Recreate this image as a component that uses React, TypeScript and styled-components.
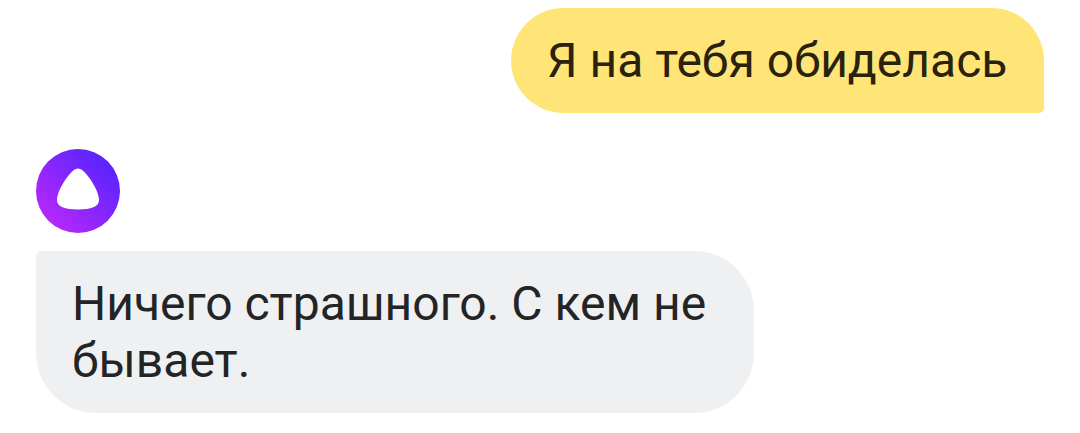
import React from 'react';
import styled, { createGlobalStyle } from 'styled-components';

const GlobalStyle = createGlobalStyle`
  body {
    margin: 0;
    background: #ffffff;
    font-family: Roboto, 'Liberation Sans', sans-serif;
  }
`;

const Chat = styled.main`
  display: flex;
  flex-direction: column;
  box-sizing: border-box;
  width: 1080px;
  height: 433px;
  padding: 8px 36px 20px;
  overflow: hidden;
`;

const Bubble = styled.div<{ $own?: boolean }>`
  box-sizing: border-box;
  align-self: ${(p) => (p.$own ? 'flex-end' : 'flex-start')};
  width: ${(p) => (p.$own ? '533px' : '718px')};
  height: ${(p) => (p.$own ? '105px' : '162px')};
  padding: 24px 36px;
  border-radius: ${(p) => (p.$own ? '54px 54px 5px 54px' : '5px 60px 60px 60px')};
  background: ${(p) => (p.$own ? '#ffe478' : '#eff0f2')};
  color: ${(p) => (p.$own ? '#29220c' : '#232426')};
  font-size: 48px;
  line-height: 57px;
`;

const Avatar = styled.svg`
  display: block;
  width: 84px;
  height: 84px;
  margin: 36px 0 18px;
`;

const Line = styled.span`
  display: block;
  white-space: nowrap;
`;

export default function App() {
  return (
    <>
      <GlobalStyle />
      <Chat>
        <Bubble $own>
          <Line>Я на тебя обиделась</Line>
        </Bubble>
        <Avatar viewBox="0 0 84 84" aria-hidden="true">
          <defs>
            <linearGradient id="violet" x1="0.15" y1="0.85" x2="0.85" y2="0.15">
              <stop offset="0" stopColor="#b428fa" />
              <stop offset="1" stopColor="#5a24ff" />
            </linearGradient>
          </defs>
          <circle cx="42" cy="42" r="42" fill="url(#violet)" />
          <path
            d="M42 19.6C45 19.6 47.5 21.9 50 24.8C55.8 31.5 63 43 63 51.2C63 57.6 55 60.4 42 60.4C29 60.4 21 57.6 21 51.2C21 43 28.2 31.5 34 24.8C36.5 21.9 39 19.6 42 19.6Z"
            fill="#ffffff"
          />
        </Avatar>
        <Bubble>
          <Line>Ничего страшного. С кем не</Line>
          <Line>бывает.</Line>
        </Bubble>
      </Chat>
    </>
  );
}
